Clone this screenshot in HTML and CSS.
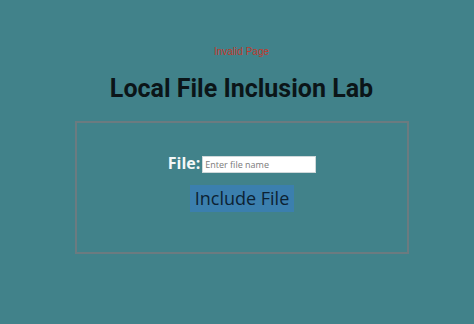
FILE: index.html
```html
<!DOCTYPE html>
<html lang="en">
<head>
    <meta charset="UTF-8">
    <meta name="viewport" content="width=device-width, initial-scale=1.0">
    <title>Local File Inclusion Lab</title>
    <link rel="stylesheet" href="styles.css">
</head>
<body>
    <p class="error">Invalid Page</p>
    <h1>Local File Inclusion Lab</h1>

    <div class="lab-box">
        <form class="lab-form">
            <div class="file-row">
                <label for="file">File:</label>
                <input type="text" id="file" name="file" placeholder="Enter file name">
            </div>
            <button type="submit">Include File</button>
        </form>
    </div>
</body>
</html>
```

FILE: styles.css
```css
html {
    background-color: #41828a;
}
body {
    margin: 0 0 0 9px;
    padding-top: 45px;
    font-family: "Liberation Sans", Arial, sans-serif;
    text-align: center;
}
.error {
    margin: 0;
    color: #c0392b;
    font-size: 10px;
    line-height: 13px;
}
h1 {
    margin: 15px 0 0;
    font-family: Roboto, sans-serif;
    font-weight: 700;
    font-size: 25px;
    line-height: 32px;
    color: #0b1518;
}
.lab-box {
    width: 330px;
    height: 129px;
    margin: 16px 0 0 66px;
    border: 2px solid #6b7b80;
}
.lab-form {
    display: flex;
    flex-direction: column;
    align-items: center;
    padding-top: 29px;
}
.file-row {
    display: flex;
    align-items: center;
    gap: 2px;
}
label {
    font-family: "Open Sans", sans-serif;
    font-weight: 700;
    font-size: 16px;
    color: #f4f8f8;
}
input {
    width: 108px;
    height: 15px;
    padding: 0 2px;
    border: 1px solid #cfd8da;
    font-family: "Open Sans", sans-serif;
    font-size: 9px;
    margin-top: 2px;
}
input::placeholder {
    color: #7a7a7a;
}
button {
    margin-top: 11px;
    padding: 0 5px;
    height: 27px;
    background-color: #3b7fae;
    border: none;
    color: #0c2233;
    font-family: "Open Sans", sans-serif;
    font-size: 18px;
    line-height: 27px;
}
```
